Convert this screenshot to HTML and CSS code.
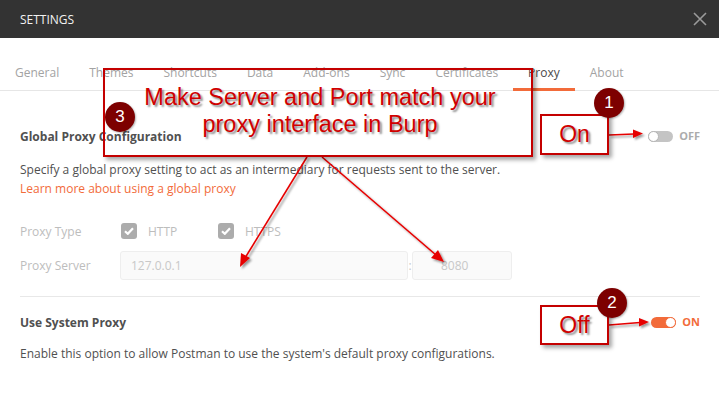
FILE: index.html
```html
<!DOCTYPE html>
<html>
<head>
<meta charset="utf-8">
<link rel="stylesheet" href="styles.css">
</head>
<body>
<div class="app">
  <header class="header">
    <span class="header-title">SETTINGS</span>
    <svg class="close" width="14" height="14" viewBox="0 0 14 14"><path d="M1 1L13 13M13 1L1 13" stroke="#9a9a9a" stroke-width="1.6" fill="none"/></svg>
  </header>
  <nav class="tabs">
    <span class="tab">General</span>
    <span class="tab">Themes</span>
    <span class="tab">Shortcuts</span>
    <span class="tab">Data</span>
    <span class="tab">Add-ons</span>
    <span class="tab">Sync</span>
    <span class="tab">Certificates</span>
    <span class="tab active">Proxy</span>
    <span class="tab">About</span>
  </nav>
  <main class="content">
    <section class="section first">
      <div class="title-row">
        <span class="title">Global Proxy Configuration</span>
        <span class="switch-wrap off"><span class="switch"><span class="knob"></span></span><span class="switch-label">OFF</span></span>
      </div>
      <p class="desc">Specify a global proxy setting to act as an intermediary for requests sent to the server.<br><span class="link">Learn more about using a global proxy</span></p>
      <div class="field-row type-row">
        <span class="label">Proxy Type</span>
        <span class="option"><span class="check"><svg width="10" height="8" viewBox="0 0 10 8"><path d="M1 4.2L3.8 6.8L9 1.2" stroke="#fff" stroke-width="2.2" fill="none"/></svg></span><span>HTTP</span></span>
        <span class="option"><span class="check"><svg width="10" height="8" viewBox="0 0 10 8"><path d="M1 4.2L3.8 6.8L9 1.2" stroke="#fff" stroke-width="2.2" fill="none"/></svg></span><span>HTTPS</span></span>
      </div>
      <div class="field-row server-row">
        <span class="label">Proxy Server</span>
        <span class="input host">127.0.0.1</span>
        <span class="colon">:</span>
        <span class="input port">8080</span>
      </div>
    </section>
    <section class="section second">
      <div class="title-row">
        <span class="title">Use System Proxy</span>
        <span class="switch-wrap on"><span class="switch"><span class="knob"></span></span><span class="switch-label">ON</span></span>
      </div>
      <p class="desc">Enable this option to allow Postman to use the system's default proxy configurations.</p>
    </section>
  </main>

  <div class="annot">
    <svg class="arrows" width="719" height="400" viewBox="0 0 719 400">
      <defs>
        <filter id="sh" x="-20%" y="-20%" width="140%" height="140%">
          <feDropShadow dx="2" dy="2" stdDeviation="1.2" flood-color="#000" flood-opacity="0.4"/>
        </filter>
      </defs>
      <g filter="url(#sh)" fill="#e60000" stroke="#e60000">
        <line x1="307" y1="157" x2="245" y2="258" stroke-width="1.6"/>
        <polygon points="240,267 241,253 250,258" stroke="none"/>
        <line x1="322" y1="157" x2="436" y2="255" stroke-width="1.6"/>
        <polygon points="444,262 431,258 438,250" stroke="none"/>
        <line x1="609" y1="135" x2="634" y2="134" stroke-width="1.6"/>
        <polygon points="643,133.5 633,129.5 633,138" stroke="none"/>
        <line x1="609" y1="325" x2="640" y2="322.5" stroke-width="1.6"/>
        <polygon points="649,322 639,318 639,326.5" stroke="none"/>
      </g>
    </svg>
    <div class="callout main">Make Server and Port match your<br>proxy interface in Burp</div>
    <div class="callout small on-box">On</div>
    <div class="callout small off-box">Off</div>
    <span class="badge b3">3</span>
    <span class="badge b1">1</span>
    <span class="badge b2">2</span>
  </div>
</div>
</body>
</html>
```
FILE: styles.css
```css
* { box-sizing: border-box; }
html, body { margin: 0; padding: 0; background: #fff; }
body { font-family: "Open Sans", "Liberation Sans", sans-serif; }

.app {
  position: relative;
  width: 719px;
  height: 400px;
  overflow: hidden;
}

.header {
  height: 38px;
  background: #333333;
  display: flex;
  align-items: center;
  justify-content: space-between;
  padding: 0 12px 0 20px;
}
.header-title {
  color: #f2f2f2;
  font-size: 12px;
}
.close { display: block; }

.tabs {
  display: flex;
  padding-top: 16px;
  border-bottom: 1px solid #e6e6e6;
}
.tab {
  font-size: 12px;
  line-height: 18px;
  color: #a3a3a3;
  padding: 10px 15px 6px;
  border-bottom: 3px solid transparent;
  margin-bottom: -1px;
}
.tab.active {
  color: #4a4a4a;
  border-bottom-color: #f26b3a;
}

.content { padding: 0 19px 0 20px; }

.section.first { padding-top: 35px; }
.section.second {
  margin-top: 16px;
  border-top: 1px solid #e8e8e8;
  padding-top: 15px;
}

.title-row {
  display: flex;
  justify-content: space-between;
  align-items: center;
  height: 20px;
}
.title {
  font-size: 12px;
  font-weight: 700;
  color: #505050;
}

.switch-wrap {
  display: flex;
  align-items: center;
  font-size: 11px;
  font-weight: 700;
}
.switch {
  position: relative;
  width: 25px;
  height: 11px;
  border-radius: 6px;
  display: block;
}
.knob {
  position: absolute;
  top: 0;
  width: 11px;
  height: 11px;
  border-radius: 50%;
  background: #fff;
}
.switch-label { margin-left: 6px; line-height: 14px; }
.off .switch { background: #c4c4c4; }
.off .knob { left: 0; border: 1px solid #b5b5b5; }
.off .switch-label { color: #acacac; }
.on .switch { background: #f26b3a; }
.on .knob { right: 0; border: 1.5px solid #f26b3a; }
.on .switch-label { color: #f26b3a; }

.desc {
  margin: 14px 0 0;
  font-size: 12px;
  line-height: 19px;
  color: #505050;
}
.second .desc { margin-top: 12px; }
.link { color: #f26b3a; }

.field-row {
  display: flex;
  align-items: center;
  font-size: 12px;
  color: #bdbdbd;
}
.type-row { margin-top: 18px; height: 30px; }
.server-row { margin-top: 5px; height: 29px; }
.label { width: 100px; }

.option {
  display: flex;
  align-items: center;
  width: 97px;
  margin-left: 1px;
  margin-right: -1px;
}
.check {
  width: 16px;
  height: 16px;
  border-radius: 3px;
  background: #acacac;
  display: flex;
  align-items: center;
  justify-content: center;
  margin-right: 11px;
}
.check svg { display: block; }

.input {
  height: 29px;
  background: #fafafa;
  border: 1px solid #eeeeee;
  border-radius: 3px;
  display: flex;
  align-items: center;
  color: #c8c8c8;
}
.host { width: 288px; padding-left: 10px; }
.colon { width: 4px; text-align: center; color: #c8c8c8; }
.port { width: 100px; padding-left: 28px; }

/* annotation overlay */
.annot {
  position: absolute;
  left: 0;
  top: 0;
  width: 719px;
  height: 400px;
  pointer-events: none;
}
.arrows { position: absolute; left: 0; top: 0; }

.callout {
  position: absolute;
  border: 2px solid #c40000;
  box-shadow: 3px 3px 4px rgba(0, 0, 0, 0.35);
  font-family: "Liberation Sans", Arial, sans-serif;
  color: #d00000;
  text-align: center;
  text-shadow: 2px 2px 2px rgba(0, 0, 0, 0.45);
}
.callout.main {
  left: 103px;
  top: 68px;
  width: 430px;
  height: 89px;
  font-size: 23.5px;
  line-height: 27px;
  padding: 14px 0 0 4px;
}
.callout.small {
  left: 540px;
  width: 69px;
  font-size: 23px;
  display: flex;
  align-items: center;
  justify-content: center;
}
.on-box { top: 114px; height: 41px; }
.off-box { top: 305px; height: 40px; }

.badge {
  position: absolute;
  width: 30px;
  height: 30px;
  border-radius: 50%;
  background: #7d0000;
  color: #fff;
  font-family: "Liberation Sans", Arial, sans-serif;
  font-size: 17px;
  display: flex;
  align-items: center;
  justify-content: center;
  box-shadow: 1px 1px 2px rgba(0, 0, 0, 0.3);
}
.b3 { left: 105px; top: 102px; }
.b1 { left: 594px; top: 88px; }
.b2 { left: 597px; top: 288px; }
```
